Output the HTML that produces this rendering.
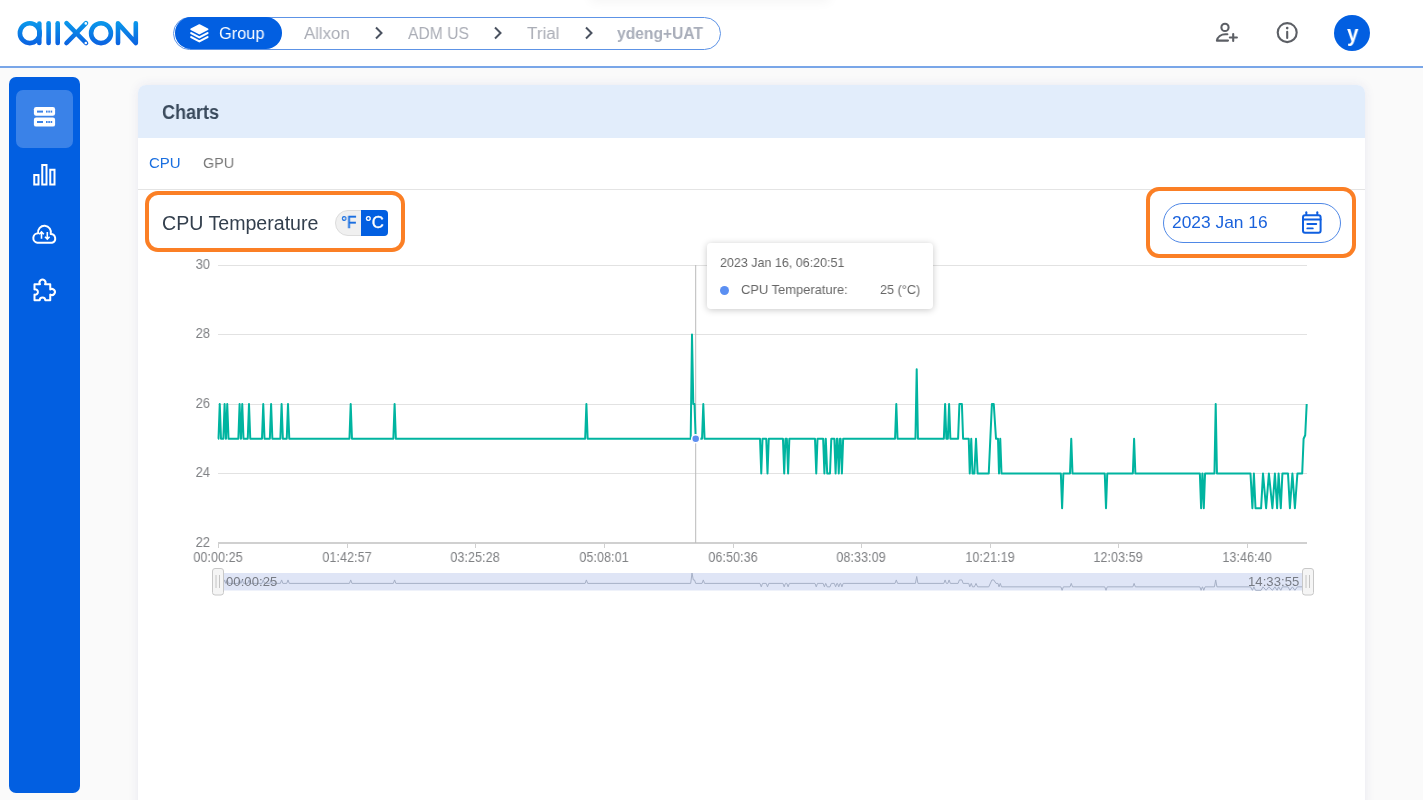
<!DOCTYPE html>
<html><head><meta charset="utf-8">
<style>
*{box-sizing:border-box;margin:0;padding:0}
html,body{width:1423px;height:800px;overflow:hidden;background:#fafafa;font-family:"Liberation Sans",sans-serif}
.abs{position:absolute}
.t{position:absolute;white-space:nowrap;line-height:1;transform-origin:0 0;will-change:transform}
#header{position:absolute;left:0;top:0;width:1423px;height:68px;background:#fff;border-bottom:2px solid #79a6e8}
#topshadow{position:absolute;left:592px;top:-20px;width:236px;height:20px;background:#fff;box-shadow:0 0 12px 2px rgba(0,0,0,0.045)}
#crumb{position:absolute;left:173px;top:16.6px;width:548px;height:33.8px;border:1.2px solid #5d93e6;border-radius:17px}
#grp{position:absolute;left:174.8px;top:17.4px;width:107px;height:31.4px;background:#025fe1;border-radius:16px}
.ct{position:absolute;top:24px;font-size:17px;line-height:1;color:#aaadb4;white-space:nowrap}
.chev{position:absolute;top:26px}
#sidebar{position:absolute;left:9px;top:77px;width:71px;height:716px;background:#025fe1;border-radius:7px}
#active{position:absolute;left:16px;top:90px;width:57px;height:58px;background:#3a82e8;border-radius:7px}
#card{position:absolute;left:138px;top:85px;width:1227px;height:730px;background:#fff;border-radius:8px;box-shadow:0 0 11px rgba(50,50,140,0.085)}
#cardhead{position:absolute;left:0;top:0;width:1227px;height:53.4px;background:#e2edfb;border-radius:8px 8px 0 0}
#divider{position:absolute;left:0;top:104px;width:1227px;height:1px;background:#e4e4e4}
.obox{position:absolute;border:4px solid #fb7f25;border-radius:13px}
#tgl{position:absolute;left:335px;top:209.5px;width:53px;height:26.7px;border:1px solid #dcdcdc;border-radius:13px 4px 4px 13px;background:#f0f0f0}
#tglc{position:absolute;left:25px;top:-1px;width:27px;height:26.7px;background:#025fe1;border-radius:0 4px 4px 0}
#datepill{position:absolute;left:1163px;top:203px;width:178px;height:40px;border:1px solid #4f88e6;border-radius:20px}
.yl{position:absolute;will-change:transform;font-size:14px;color:#808285;line-height:1;text-align:right;width:60px;height:15px;transform:scaleX(0.93);transform-origin:100% 50%}
.xl{position:absolute;will-change:transform;font-size:14px;color:#808285;line-height:1;text-align:center;width:120px;height:15px;transform:scaleX(0.905);transform-origin:50% 50%}
#tooltip{position:absolute;left:707px;top:243px;width:226px;height:66px;background:#fff;border-radius:4px;box-shadow:0 1px 7px rgba(0,0,0,0.22)}
</style></head><body>
<div id="header">
  <svg class="abs" style="left:0;top:0" width="160" height="66" viewBox="0 0 160 66">
    <defs><linearGradient id="lg" gradientUnits="userSpaceOnUse" x1="0" y1="20" x2="0" y2="46"><stop offset="0" stop-color="#0a9ceb"/><stop offset="1" stop-color="#0b5fe0"/></linearGradient></defs>
    <g fill="none" stroke="url(#lg)" stroke-width="4.6" stroke-linecap="round">
      <circle cx="29.8" cy="33.2" r="9.9"/>
      <line x1="39.3" y1="23.5" x2="39.3" y2="43"/>
      <line x1="48.6" y1="23.2" x2="48.6" y2="43"/>
      <line x1="57.7" y1="23.2" x2="57.7" y2="43"/>
      <line x1="66.5" y1="23.2" x2="86" y2="43"/>
      <line x1="86" y1="23.2" x2="66.5" y2="43"/>
      <circle cx="101" cy="33.2" r="9.9"/>
      <polyline points="118,43 118,23.2 135.8,43 135.8,23.2" stroke-linejoin="round"/>
    </g>
    <circle cx="85.8" cy="23.4" r="1.3" fill="#fff"/>
    <circle cx="85.8" cy="43" r="1.3" fill="#fff"/>
  </svg>
  <div id="crumb"></div>
  <div id="grp"></div>
  <svg class="abs" style="left:186px;top:20px" width="26" height="26" viewBox="186 20 26 26">
    <path d="M199.35 25 L207.6 29.3 L199.35 33.6 L191.1 29.3 Z" fill="#fff" stroke="#fff" stroke-width="1.6" stroke-linejoin="round"/>
    <path d="M191.2 33.1 L199.35 37.4 L207.5 33.1 M191.2 37.1 L199.35 41.4 L207.5 37.1" fill="none" stroke="#fff" stroke-width="2.2" stroke-linecap="round" stroke-linejoin="round"/>
  </svg>
  <div class="t" id="tx-group" style="left:218.88px;top:24.89px;font-size:17.3px;transform:scaleX(0.9455);color:#fff;font-weight:normal">Group</div>
  <div class="t" id="tx-allxon" style="left:304.4px;top:24.99px;font-size:17.3px;transform:scaleX(0.9714);color:#aaadb6;font-weight:normal">Allxon</div>
  <div class="t" id="tx-admus" style="left:408.2px;top:24.92px;font-size:17.3px;transform:scaleX(0.9047);color:#aaadb6;font-weight:normal">ADM US</div>
  <div class="t" id="tx-trial" style="left:526.76px;top:25.02px;font-size:17.3px;transform:scaleX(0.9846);color:#aaadb6;font-weight:normal">Trial</div>
  <div class="t" id="tx-ydeng" style="left:616.54px;top:24.97px;font-size:17px;transform:scaleX(0.9182);color:#a9aeba;font-weight:bold">ydeng+UAT</div>
  <svg class="chev" style="left:374px" width="10" height="14" viewBox="0 0 10 14"><path d="M2 1.5 L7.5 7 L2 12.5" fill="none" stroke="#4a5260" stroke-width="2"/></svg>
  <svg class="chev" style="left:493px" width="10" height="14" viewBox="0 0 10 14"><path d="M2 1.5 L7.5 7 L2 12.5" fill="none" stroke="#4a5260" stroke-width="2"/></svg>
  <svg class="chev" style="left:584px" width="10" height="14" viewBox="0 0 10 14"><path d="M2 1.5 L7.5 7 L2 12.5" fill="none" stroke="#4a5260" stroke-width="2"/></svg>
  <!-- right icons -->
  <svg class="abs" style="left:1200px;top:10px" width="110" height="46" viewBox="1200 10 110 46">
    <g fill="none" stroke="#5c5f65" stroke-width="2.1" stroke-linecap="round" stroke-linejoin="round">
      <circle cx="1225" cy="27.4" r="3.6"/>
      <path d="M1227.4 34.2 L1225.5 34.2 C1221 34.2 1217.6 37 1216.9 40.6 L1228 40.6"/>
      <line x1="1229.8" y1="37.5" x2="1236.9" y2="37.5"/>
      <line x1="1233.2" y1="34.1" x2="1233.2" y2="40.9"/>
      <circle cx="1287.2" cy="32.6" r="9.5"/>
      <line x1="1287.2" y1="31.8" x2="1287.2" y2="38"/>
    </g>
    <circle cx="1287.2" cy="28.1" r="1.3" fill="#5c5f65"/>
  </svg>
  <div class="abs" style="left:1334px;top:15px;width:36px;height:36px;border-radius:50%;background:#025fe1"></div>
  <div class="t" id="tx-avy" style="left:1346.84px;top:22.92px;font-size:22px;transform:scaleX(0.9343);color:#fff;font-weight:bold">y</div>
</div>
<div id="topshadow"></div>
<div id="sidebar"></div>
<div id="active"></div>
<svg class="abs" style="left:0;top:70px" width="90" height="250" viewBox="0 70 90 250">
  <rect x="33.9" y="107.1" width="21.2" height="8.7" rx="2.2" fill="#fff"/>
  <rect x="33.9" y="117.6" width="21.2" height="9" rx="2.2" fill="#fff"/>
  <g fill="#3a82e8">
    <rect x="37" y="110.6" width="6" height="2"/><rect x="46" y="110.6" width="1.6" height="2"/><rect x="48.3" y="110.6" width="1.6" height="2"/><rect x="50.6" y="110.6" width="1.6" height="2"/>
    <rect x="37" y="121" width="6" height="2"/><rect x="46" y="121" width="1.6" height="2"/><rect x="48.3" y="121" width="1.6" height="2"/><rect x="50.6" y="121" width="1.6" height="2"/>
  </g>
  <path d="M37.3 242.8 A4.8 4.8 0 0 1 38.14 233.27 A6.45 6.45 0 1 1 50.70 233.99 A4.5 4.5 0 0 1 52 242.8 Z" fill="none" stroke="#fff" stroke-width="2" stroke-linejoin="round"/>
  <g fill="none" stroke="#fff" stroke-width="2">
    <rect x="34.25" y="175" width="4.25" height="9.5"/>
    <rect x="42.25" y="165" width="4.25" height="19.5"/>
    <rect x="50.25" y="169.75" width="4.25" height="14.75"/>
    
    <path d="M41.5 238.8 V232 M39.2 234.2 L41.5 231.8 L43.8 234.2" stroke-width="1.6"/>
    <path d="M47.3 232 V239 M45 236.8 L47.3 239.2 L49.6 236.8" stroke-width="1.6"/>
    <path d="M34.5 284.25 H40 A3 3 0 1 1 45 284.25 H50.25 V289.5 A3 3 0 1 1 50.25 294.5 V300.25 H45.3 A2.8 2.8 0 1 0 39.7 300.25 H34.5 V294.6 A2.7 2.7 0 1 0 34.5 289.4 Z" stroke-linejoin="round"/>
  </g>
</svg>
<div id="card">
  <div id="cardhead"></div>
  
  
  
  <div id="divider"></div>
</div>
<div class="obox" style="left:145.2px;top:191px;width:260.3px;height:61.2px"></div>
<div class="t" id="tx-charts" style="left:162.18px;top:101.62px;font-size:20px;transform:scaleX(0.8997);color:#3a4a5c;font-weight:bold">Charts</div>
<div class="t" id="tx-cpu" style="left:149.36px;top:155.13px;font-size:15px;transform:scaleX(0.9865);color:#1a6fe0;font-weight:normal">CPU</div>
<div class="t" id="tx-gpu" style="left:202.88px;top:155.13px;font-size:15px;transform:scaleX(0.9542);color:#777;font-weight:normal">GPU</div>
<div class="t" id="tx-cputemp" style="left:162.32px;top:214.48px;font-size:19.5px;transform:scaleX(1.0045);color:#333f4d;font-weight:normal">CPU Temperature</div>
<div id="tgl"><div id="tglc"></div></div>
<div class="t" id="tx-degF" style="left:340.68px;top:213.82px;font-size:16.5px;transform:scaleX(0.9324);color:#1a6fe0;font-weight:normal;-webkit-text-stroke:0.35px #1a6fe0">°F</div>
<div class="t" id="tx-degC" style="left:364.79px;top:213.82px;font-size:16.5px;transform:scaleX(1.016);color:#fff;font-weight:normal;-webkit-text-stroke:0.35px #fff">°C</div>
<div class="obox" style="left:1146.2px;top:187px;width:210.3px;height:71px"></div>
<div id="datepill"></div>
<div class="t" id="tx-date" style="left:1172.33px;top:214.8px;font-size:16.6px;transform:scaleX(1.0478);color:#1a62dc;font-weight:normal">2023 Jan 16</div>
<svg class="abs" style="left:1295px;top:205px" width="34" height="34" viewBox="1295 205 34 34">
  <g fill="none" stroke="#0f5fe0" stroke-width="2" stroke-linejoin="round" stroke-linecap="round">
    <rect x="1303" y="215.2" width="17.6" height="17.6" rx="2"/>
    <line x1="1303" y1="219.6" x2="1320.6" y2="219.6"/>
    <line x1="1306.3" y1="212.3" x2="1306.3" y2="214.5"/>
    <line x1="1317.3" y1="212.3" x2="1317.3" y2="214.5"/>
    <line x1="1307.3" y1="224" x2="1316.3" y2="224" stroke-width="1.8"/>
    <line x1="1307.3" y1="228.4" x2="1312.8" y2="228.4" stroke-width="1.8"/>
  </g>
</svg>
<!-- chart -->
<svg class="abs" style="left:0;top:0" width="1423" height="800" viewBox="0 0 1423 800">
  <g stroke="#e2e2e2" stroke-width="1" shape-rendering="crispEdges">
    <line x1="218" y1="265" x2="1307" y2="265"/>
    <line x1="218" y1="334" x2="1307" y2="334"/>
    <line x1="218" y1="404" x2="1307" y2="404"/>
    <line x1="218" y1="473" x2="1307" y2="473"/>
  </g>
  <g stroke="#d0d0d0" stroke-width="2" fill="none">
    <line x1="218" y1="543" x2="1307" y2="543"/>
  </g>
  <g stroke="#d0d0d0" stroke-width="1" shape-rendering="crispEdges">
    <line x1="218" y1="543" x2="218" y2="548"/>
    <line x1="347" y1="543" x2="347" y2="548"/>
    <line x1="475" y1="543" x2="475" y2="548"/>
    <line x1="604" y1="543" x2="604" y2="548"/>
    <line x1="733" y1="543" x2="733" y2="548"/>
    <line x1="861" y1="543" x2="861" y2="548"/>
    <line x1="990" y1="543" x2="990" y2="548"/>
    <line x1="1118" y1="543" x2="1118" y2="548"/>
    <line x1="1247" y1="543" x2="1247" y2="548"/>
  </g>
  <line x1="695.7" y1="265" x2="695.7" y2="543" stroke="#bbb" stroke-width="1"/>
  <path d="M218.00,438.75 L218.50,438.75 L219.75,404.00 L221.00,438.75 L223.35,438.75 L224.60,404.00 L225.85,438.75 L226.00,438.75 L227.25,404.00 L228.50,438.75 L238.35,438.75 L239.60,404.00 L240.85,438.75 L241.00,438.75 L242.25,404.00 L243.50,438.75 L247.75,438.75 L249.00,404.00 L250.25,438.75 L262.00,438.75 L263.25,404.00 L264.50,438.75 L269.85,438.75 L271.10,404.00 L272.35,438.75 L280.35,438.75 L281.60,404.00 L282.85,438.75 L286.75,438.75 L288.00,404.00 L289.25,438.75 L349.45,438.75 L350.70,404.00 L351.95,438.75 L393.35,438.75 L394.60,404.00 L395.85,438.75 L585.15,438.75 L586.40,404.00 L587.65,438.75 L690.70,438.75 L692.00,334.50 L693.30,404.00 L694.50,404.00 L695.70,438.75 L702.05,438.75 L703.30,404.00 L704.55,438.75 L760.00,438.75 L761.25,473.50 L762.50,438.75 L766.25,438.75 L767.50,473.50 L768.75,438.75 L782.95,438.75 L784.20,473.50 L785.45,438.75 L786.85,438.75 L788.10,473.50 L789.35,438.75 L815.00,438.75 L816.25,473.50 L817.50,438.75 L823.15,438.75 L824.40,473.50 L825.65,438.75 L825.80,438.75 L827.20,473.50 L830.00,473.50 L831.30,438.75 L834.35,438.75 L835.60,473.50 L836.85,438.75 L837.50,438.75 L838.75,473.50 L840.00,438.75 L840.65,438.75 L841.90,473.50 L843.15,438.75 L895.05,438.75 L896.30,404.00 L897.55,438.75 L915.45,438.75 L916.70,369.25 L917.95,438.75 L943.85,438.75 L945.10,404.00 L946.35,438.75 L947.85,438.75 L949.10,404.00 L950.35,438.75 L958.10,438.75 L959.40,404.00 L961.90,404.00 L963.10,438.75 L968.75,438.75 L969.75,473.50 L971.25,438.75 L972.50,473.50 L974.40,473.50 L976.00,438.75 L977.60,473.50 L988.75,473.50 L991.90,404.00 L993.75,404.00 L996.00,438.75 L998.00,438.75 L999.00,473.50 L1000.25,438.75 L1001.50,473.50 L1060.85,473.50 L1062.10,508.25 L1063.35,473.50 L1070.00,473.50 L1071.25,438.75 L1072.50,473.50 L1104.75,473.50 L1106.00,508.25 L1107.25,473.50 L1132.85,473.50 L1134.10,438.75 L1135.35,473.50 L1199.85,473.50 L1201.10,508.25 L1202.35,473.50 L1202.55,473.50 L1203.80,508.25 L1205.05,473.50 L1214.45,473.50 L1215.70,404.00 L1216.95,473.50 L1250.50,473.50 L1252.40,508.25 L1253.90,473.50 L1255.50,508.25 L1261.10,508.25 L1263.00,473.50 L1266.10,508.25 L1268.90,473.50 L1272.40,508.25 L1274.90,473.50 L1277.10,508.25 L1278.60,473.50 L1280.80,508.25 L1282.40,473.50 L1288.00,473.50 L1289.90,508.25 L1292.40,473.50 L1294.90,508.25 L1297.40,473.50 L1302.20,473.50 L1303.60,438.75 L1305.20,435.27 L1306.70,404.00" fill="none" stroke="#00b4a0" stroke-width="2" stroke-linejoin="round"/>
  <circle cx="695.7" cy="438.75" r="4" fill="#5d8ef0" stroke="#fff" stroke-width="1.5"/>
  <!-- slider -->
  <rect x="218" y="573" width="1089" height="17.5" fill="#dfe5f6"/>
  <path d="M218.00,583.40 L218.50,583.40 L219.75,579.95 L221.00,583.40 L223.35,583.40 L224.60,579.95 L225.85,583.40 L226.00,583.40 L227.25,579.95 L228.50,583.40 L238.35,583.40 L239.60,579.95 L240.85,583.40 L241.00,583.40 L242.25,579.95 L243.50,583.40 L247.75,583.40 L249.00,579.95 L250.25,583.40 L262.00,583.40 L263.25,579.95 L264.50,583.40 L269.85,583.40 L271.10,579.95 L272.35,583.40 L280.35,583.40 L281.60,579.95 L282.85,583.40 L286.75,583.40 L288.00,579.95 L289.25,583.40 L349.45,583.40 L350.70,579.95 L351.95,583.40 L393.35,583.40 L394.60,579.95 L395.85,583.40 L585.15,583.40 L586.40,579.95 L587.65,583.40 L690.70,583.40 L692.00,573.05 L693.30,579.95 L694.50,579.95 L695.70,583.40 L702.05,583.40 L703.30,579.95 L704.55,583.40 L760.00,583.40 L761.25,586.85 L762.50,583.40 L766.25,583.40 L767.50,586.85 L768.75,583.40 L782.95,583.40 L784.20,586.85 L785.45,583.40 L786.85,583.40 L788.10,586.85 L789.35,583.40 L815.00,583.40 L816.25,586.85 L817.50,583.40 L823.15,583.40 L824.40,586.85 L825.65,583.40 L825.80,583.40 L827.20,586.85 L830.00,586.85 L831.30,583.40 L834.35,583.40 L835.60,586.85 L836.85,583.40 L837.50,583.40 L838.75,586.85 L840.00,583.40 L840.65,583.40 L841.90,586.85 L843.15,583.40 L895.05,583.40 L896.30,579.95 L897.55,583.40 L915.45,583.40 L916.70,576.50 L917.95,583.40 L943.85,583.40 L945.10,579.95 L946.35,583.40 L947.85,583.40 L949.10,579.95 L950.35,583.40 L958.10,583.40 L959.40,579.95 L961.90,579.95 L963.10,583.40 L968.75,583.40 L969.75,586.85 L971.25,583.40 L972.50,586.85 L974.40,586.85 L976.00,583.40 L977.60,586.85 L988.75,586.85 L991.90,579.95 L993.75,579.95 L996.00,583.40 L998.00,583.40 L999.00,586.85 L1000.25,583.40 L1001.50,586.85 L1060.85,586.85 L1062.10,590.30 L1063.35,586.85 L1070.00,586.85 L1071.25,583.40 L1072.50,586.85 L1104.75,586.85 L1106.00,590.30 L1107.25,586.85 L1132.85,586.85 L1134.10,583.40 L1135.35,586.85 L1199.85,586.85 L1201.10,590.30 L1202.35,586.85 L1202.55,586.85 L1203.80,590.30 L1205.05,586.85 L1214.45,586.85 L1215.70,579.95 L1216.95,586.85 L1250.50,586.85 L1252.40,590.30 L1253.90,586.85 L1255.50,590.30 L1261.10,590.30 L1263.00,586.85 L1266.10,590.30 L1268.90,586.85 L1272.40,590.30 L1274.90,586.85 L1277.10,590.30 L1278.60,586.85 L1280.80,590.30 L1282.40,586.85 L1288.00,586.85 L1289.90,590.30 L1292.40,586.85 L1294.90,590.30 L1297.40,586.85 L1302.20,586.85 L1303.60,583.40 L1305.20,583.05 L1306.70,579.95" fill="none" stroke="#a6b0c6" stroke-width="1"/>
  <g fill="#f5f5f5" stroke="#c8c8c8" stroke-width="1">
    <rect x="212.5" y="568.5" width="11" height="26.5" rx="2.5"/>
    <rect x="1302.5" y="568.5" width="11" height="26.5" rx="2.5"/>
  </g>
  <g stroke="#c4c4c4" stroke-width="1">
    <line x1="216" y1="575" x2="216" y2="588"/><line x1="219.5" y1="575" x2="219.5" y2="588"/>
    <line x1="1306" y1="575" x2="1306" y2="588"/><line x1="1309.5" y1="575" x2="1309.5" y2="588"/>
  </g>
</svg>
<div class="yl" id="tx-yl30" style="left:149.5px;top:256.65px">30</div>
<div class="yl" style="left:149.5px;top:326.15px">28</div>
<div class="yl" style="left:149.5px;top:395.65px">26</div>
<div class="yl" style="left:149.5px;top:465.15px">24</div>
<div class="yl" style="left:149.5px;top:534.65px">22</div>
<div class="xl" id="tx-xl0" style="left:158.15px;top:550.3px">00:00:25</div>
<div class="xl" style="left:286.75px;top:550.3px">01:42:57</div>
<div class="xl" style="left:415.35px;top:550.3px">03:25:28</div>
<div class="xl" style="left:543.95px;top:550.3px">05:08:01</div>
<div class="xl" style="left:672.55px;top:550.3px">06:50:36</div>
<div class="xl" style="left:801.15px;top:550.3px">08:33:09</div>
<div class="xl" style="left:929.75px;top:550.3px">10:21:19</div>
<div class="xl" style="left:1058.35px;top:550.3px">12:03:59</div>
<div class="xl" style="left:1186.95px;top:550.3px">13:46:40</div>
<div class="t" id="tx-sl0" style="left:225.8px;top:574.5px;font-size:13.1px;letter-spacing:0.05px;color:#777b84">00:00:25</div>
<div class="t" id="tx-sl1" style="left:1247.8px;top:574.5px;font-size:13.1px;letter-spacing:0.05px;color:#777b84">14:33:55</div>
<div id="tooltip"></div>
<div class="t" id="tx-ytt" style="left:720.07px;top:256.23px;font-size:13.5px;transform:scaleX(0.9265);color:#666;font-weight:normal">2023 Jan 16, 06:20:51</div>
<div class="abs" style="left:720.4px;top:286px;width:9px;height:9px;border-radius:50%;background:#5b8ff2"></div>
<div class="t" id="tx-cputt" style="left:741.35px;top:283.08px;font-size:13.5px;transform:scaleX(0.9569);color:#666;font-weight:normal">CPU Temperature:</div>
<div class="t" id="tx-val" style="left:880.17px;top:283.23px;font-size:13.5px;transform:scaleX(0.9362);color:#666;font-weight:normal">25 (°C)</div>
</body></html>
